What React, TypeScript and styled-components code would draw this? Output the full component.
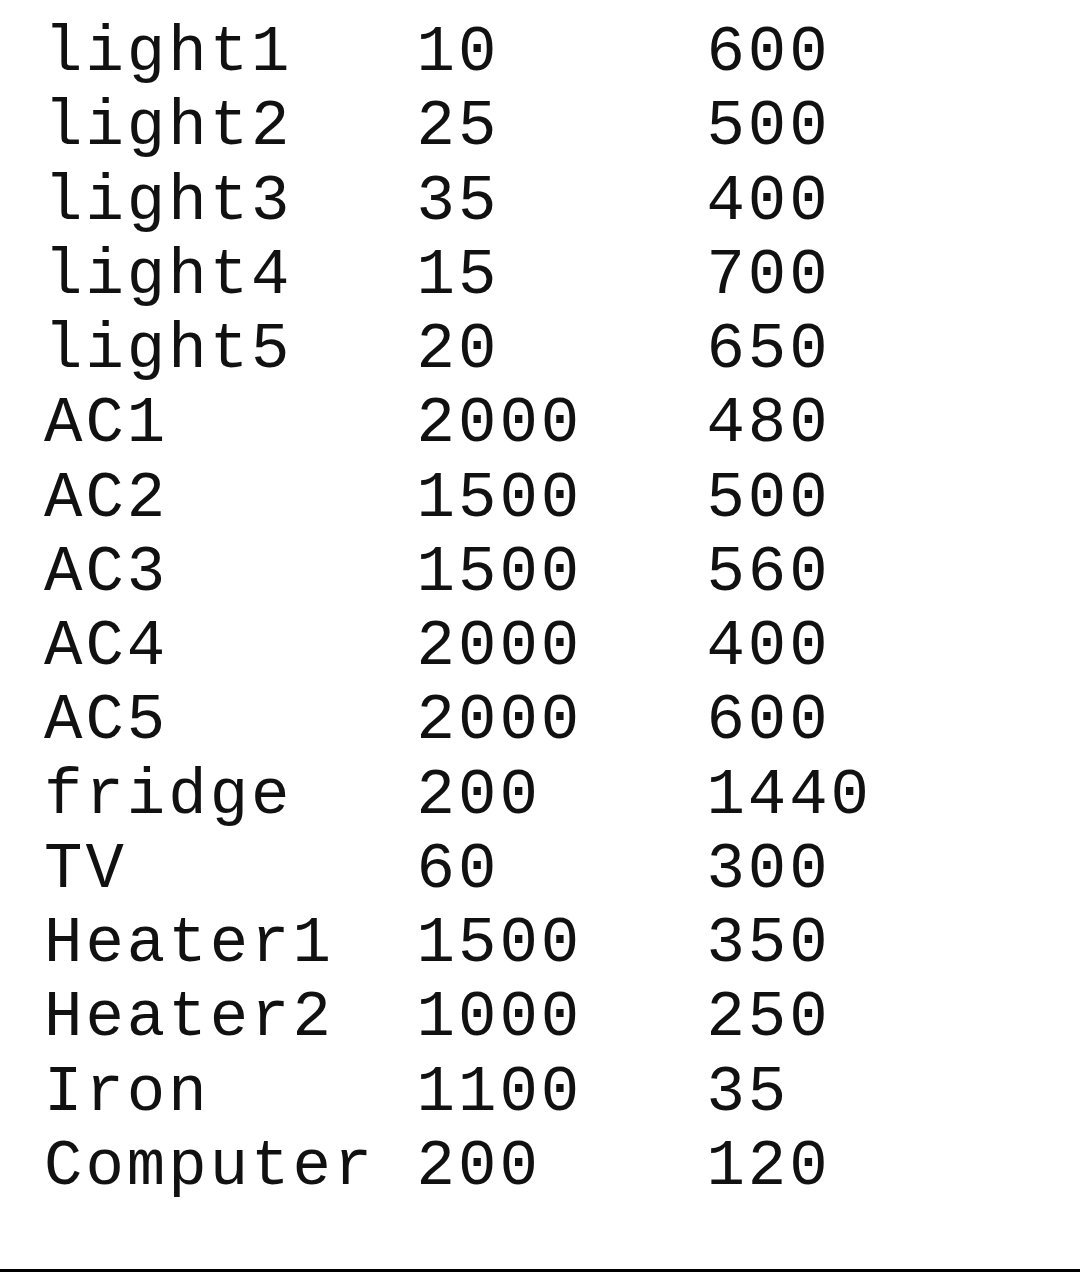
import React from "react";
import styled, { createGlobalStyle } from "styled-components";

const GlobalStyle = createGlobalStyle`
  html, body {
    margin: 0;
    padding: 0;
    background: #fff;
  }
`;

const Page = styled.div`
  box-sizing: border-box;
  width: 1080px;
  height: 1272px;
  padding: 16px 0 0 44px;
  border-bottom: 3px solid #000;
  background: #fff;
  overflow: hidden;
`;

const Table = styled.div`
  display: grid;
  grid-template-columns: 372.6px 289.8px auto;
  justify-content: start;
  font-family: "Liberation Mono", "Courier New", monospace;
  font-size: 64px;
  letter-spacing: 3px;
  line-height: 74.27px;
  color: #111;
  white-space: pre;
`;

const Cell = styled.span``;

const rows: [string, number, number][] = [
  ["light1", 10, 600],
  ["light2", 25, 500],
  ["light3", 35, 400],
  ["light4", 15, 700],
  ["light5", 20, 650],
  ["AC1", 2000, 480],
  ["AC2", 1500, 500],
  ["AC3", 1500, 560],
  ["AC4", 2000, 400],
  ["AC5", 2000, 600],
  ["fridge", 200, 1440],
  ["TV", 60, 300],
  ["Heater1", 1500, 350],
  ["Heater2", 1000, 250],
  ["Iron", 1100, 35],
  ["Computer", 200, 120],
];

export default function App() {
  return (
    <>
      <GlobalStyle />
      <Page>
        <Table>
          {rows.map(([name, watts, hours]) => (
            <React.Fragment key={name}>
              <Cell>{name}</Cell>
              <Cell>{watts}</Cell>
              <Cell>{hours}</Cell>
            </React.Fragment>
          ))}
        </Table>
      </Page>
    </>
  );
}
